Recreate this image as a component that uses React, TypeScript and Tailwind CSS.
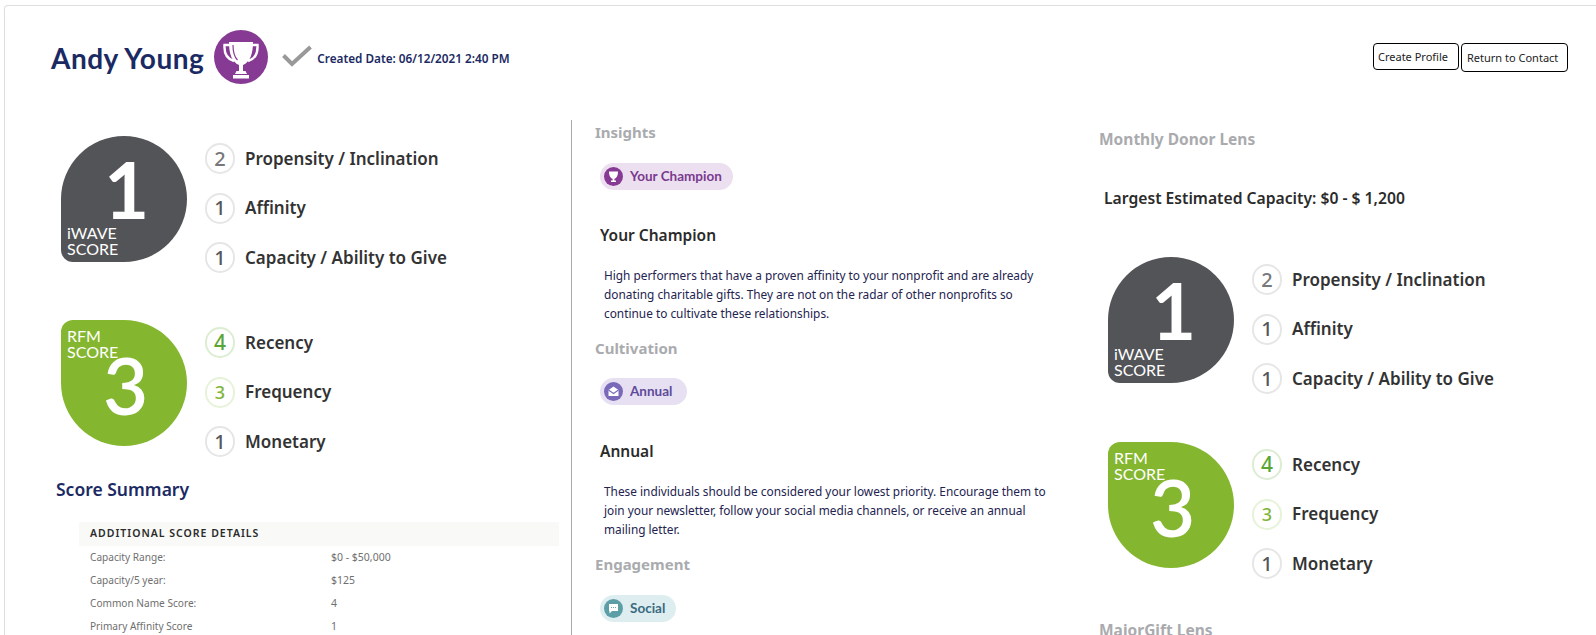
const sans = "font-['Noto_Sans','Liberation_Sans',sans-serif]";
const lato = "font-['Lato','Noto_Sans',sans-serif]";

const TrophyIcon = () => (
  <svg viewBox="0 0 54 54" className="h-[54px] w-[54px] shrink-0">
    <circle cx="27" cy="27" r="27" fill="#873a93" />
    <path d="M16 15H10.5C10 23 13 29 20 31M38 15H43.5C44 23 41 29 34 31" fill="none" stroke="#fff" strokeWidth="2.4" />
    <path d="M15 12H39C39 24 36 32 29 35V41H25V35C18 32 15 24 15 12Z" fill="#fff" />
    <path d="M19 15C19 22 20.5 27 23.5 30" fill="none" stroke="#873a93" strokeWidth="1.2" />
    <path d="M22.5 41H31.5L33 44H21Z" fill="#fff" />
    <rect x="19" y="45" width="16" height="3.5" fill="#fff" />
  </svg>
);

const PillTrophy = () => (
  <svg viewBox="0 0 19 19" className="h-[19px] w-[19px] shrink-0">
    <circle cx="9.5" cy="9.5" r="9.5" fill="#873a93" />
    <path d="M5 4.5H14C14 9 12.5 11 10.4 11.8V13.6H12V15H7V13.6H8.6V11.8C6.5 11 5 9 5 4.5Z" fill="#fff" />
  </svg>
);

const PillEnvelope = () => (
  <svg viewBox="0 0 19 19" className="h-[19px] w-[19px] shrink-0">
    <circle cx="9.5" cy="9.5" r="9.5" fill="#7a68b8" />
    <path d="M4.5 8L9.5 4.5L14.5 8V14H4.5Z" fill="#fff" />
    <path d="M4.5 8L9.5 11.5L14.5 8" fill="none" stroke="#7a68b8" strokeWidth="1.1" />
  </svg>
);

const PillChat = () => (
  <svg viewBox="0 0 19 19" className="h-[19px] w-[19px] shrink-0">
    <circle cx="9.5" cy="9.5" r="9.5" fill="#5b9ea6" />
    <path d="M5 5H14V12H8L5.5 14.5V12H5Z" fill="#fff" />
    <path d="M7 8.5H7.9M9.1 8.5H10M11.1 8.5H12" stroke="#5b9ea6" strokeWidth="1.1" />
  </svg>
);

const Row = ({ n, label, tone = 'gray' }: { n: number; label: string; tone?: 'gray' | 'light' | 'green' | 'lime' }) => {
  const ring = {
    gray: 'border-[#e6e6e6] text-[#555659] text-[20px]',
    light: 'border-[#e6e6e6] text-[#77787b] text-[20px]',
    green: 'border-[#dcedd3] text-[#5aa634] text-[21px]',
    lime: 'border-[#e6f3d8] text-[#7fb539] text-[18px]',
  }[tone];
  return (
    <div className="flex h-[31px] items-center">
      <div className={`flex h-[31px] w-[30px] shrink-0 items-center justify-center rounded-full border-2 font-medium ${ring}`}>{n}</div>
      <span className="ml-[10px] text-[17px] font-semibold whitespace-nowrap text-[#333]">{label}</span>
    </div>
  );
};

const IwaveBlock = () => (
  <div className="flex">
    <div className={`relative h-[126px] w-[126px] shrink-0 rounded-[63px_63px_63px_12px] bg-[#535457] text-white ${lato}`}>
      <span className="absolute top-[23px] left-[43px] text-[78px] leading-[60px] font-bold">1</span>
      <span className="absolute bottom-[6px] left-[6px] text-[16px] leading-[15.5px]">iWAVE<br />SCORE</span>
    </div>
    <div className="mt-[7px] ml-[18px] flex flex-col gap-[18.5px]">
      <Row n={2} label="Propensity / Inclination" tone="light" />
      <Row n={1} label="Affinity" />
      <Row n={1} label="Capacity / Ability to Give" />
    </div>
  </div>
);

const RfmBlock = () => (
  <div className="flex">
    <div className={`relative h-[126px] w-[126px] shrink-0 rounded-[12px_63px_63px_63px] bg-[#84b72f] text-white ${lato}`}>
      <span className="absolute top-[8px] left-[6px] text-[16px] leading-[15.5px]">RFM<br />SCORE</span>
      <span className="absolute top-[39px] left-[42px] text-[78px] leading-[52px] font-semibold">3</span>
    </div>
    <div className="mt-[7px] ml-[18px] flex flex-col gap-[18.5px]">
      <Row n={4} label="Recency" tone="green" />
      <Row n={3} label="Frequency" tone="lime" />
      <Row n={1} label="Monetary" />
    </div>
  </div>
);

const Pill = ({ bg, color, icon, label, pad = 'pr-[11px]' }: { bg: string; color: string; icon: React.ReactNode; label: string; pad?: string }) => (
  <div className={`flex h-[27px] w-fit items-center rounded-full pl-[4px] ${pad} ${bg}`}>
    {icon}
    <span className={`ml-[7px] text-[13.5px] font-bold ${lato} ${color}`}>{label}</span>
  </div>
);

const SectionTitle = ({ children, size = 'text-[15px]' }: { children: React.ReactNode; size?: string }) => (
  <h3 className={`leading-[20px] font-bold text-[#aaabae] ${size}`}>{children}</h3>
);

const Insight = ({ title, text }: { title: string; text: string }) => (
  <div className="pl-[5px]">
    <h4 className="text-[15.5px] leading-[20px] font-semibold text-[#2b2b2b]">{title}</h4>
    <p className="mt-[21px] ml-[4px] w-[448px] text-[11.85px] leading-[19px] text-[#23234f]">{text}</p>
  </div>
);

const details = [
  ['Capacity Range:', '$0 - $50,000'],
  ['Capacity/5 year:', '$125'],
  ['Common Name Score:', '4'],
  ['Primary Affinity Score', '1'],
];

export default function App() {
  return (
    <div className={`h-[635px] overflow-hidden bg-white pt-[5px] pl-[4px] ${sans}`}>
      <div className="h-[700px] rounded-tl-[4px] border-t border-l border-[#dedede]">
        <header className="flex h-[114px] items-start pt-[24px] pr-[28px] pl-[46px]">
          <h1 className={`mt-[10px] text-[28px] leading-[36px] font-bold tracking-[0.5px] text-[#1b2a63] ${lato}`}>Andy Young</h1>
          <div className="ml-[10px]"><TrophyIcon /></div>
          <svg viewBox="0 0 30 22" className="mt-[15px] ml-[14px] h-[22px] w-[30px]">
            <path d="M1.5 10.5L10 19L28.5 2" fill="none" stroke="#999" strokeWidth="4" />
          </svg>
          <span className="mt-[20px] ml-[5px] text-[11.75px] leading-[16px] font-semibold text-[#1b2a63]">Created Date: 06/12/2021 2:40 PM</span>
          <div className="ml-auto flex items-start gap-[2px] pt-[13px] text-[11px] text-[#222]">
            <button className="h-[27px] w-[86px] rounded-[4px] border border-black pt-[2px] pl-[4px] text-left">Create Profile</button>
            <button className="h-[29px] w-[107px] rounded-[4px] border border-black pt-[2px] pl-[5px] text-left">Return to Contact</button>
          </div>
        </header>

        <div className="flex">
          <section className="w-[567px] shrink-0 border-r border-[#a9a9a9] pt-[16px] pl-[56px]">
            <IwaveBlock />
            <div className="mt-[47px]"><RfmBlock /></div>
            <h2 className="mt-[20px] -ml-[5px] text-[17.5px] leading-[24px] font-semibold text-[#1b2a63]">Score Summary</h2>
            <div className="mt-[21px] ml-[18px] mr-[12px]">
              <div className="flex h-[24px] items-center bg-[#f9f9f7] pl-[11px] text-[10.5px] font-semibold tracking-[1px] text-[#2b2b2b]">ADDITIONAL SCORE DETAILS</div>
              {details.map(([k, v]) => (
                <div key={k} className="flex h-[23px] items-center pl-[11px] text-[#6f6f6f]">
                  <span className="w-[241px] text-[10.1px]">{k}</span>
                  <span className="text-[10.5px]">{v}</span>
                </div>
              ))}
            </div>
          </section>

          <section className="w-[527px] shrink-0 pt-[2px] pl-[23px]">
            <SectionTitle>Insights</SectionTitle>
            <div className="mt-[21px] ml-[5px]">
              <Pill bg="bg-[#ecdff0]" color="text-[#7a3a8f]" icon={<PillTrophy />} label="Your Champion" />
            </div>
            <div className="mt-[35px]">
              <Insight title="Your Champion" text="High performers that have a proven affinity to your nonprofit and are already donating charitable gifts. They are not on the radar of other nonprofits so continue to cultivate these relationships." />
            </div>
            <div className="mt-[15px]"><SectionTitle>Cultivation</SectionTitle></div>
            <div className="mt-[20px] ml-[5px]">
              <Pill bg="bg-[#e6e0f2]" color="text-[#5e4a9a]" icon={<PillEnvelope />} label="Annual" pad="pr-[15px]" />
            </div>
            <div className="mt-[36px]">
              <Insight title="Annual" text="These individuals should be considered your lowest priority. Encourage them to join your newsletter, follow your social media channels, or receive an annual mailing letter." />
            </div>
            <div className="mt-[15px]"><SectionTitle>Engagement</SectionTitle></div>
            <div className="mt-[21px] ml-[5px]">
              <Pill bg="bg-[#deeef0]" color="text-[#3a6a80]" icon={<PillChat />} label="Social" />
            </div>
          </section>

          <section className="flex-1 pt-[9px]">
            <SectionTitle size="text-[15.5px]">Monthly Donor Lens</SectionTitle>
            <p className="mt-[39px] ml-[5px] text-[15.7px] leading-[20px] font-semibold text-[#2b2b2b]">Largest Estimated Capacity: $0 - $ 1,200</p>
            <div className="mt-[49px] ml-[9px]"><IwaveBlock /></div>
            <div className="mt-[48px] ml-[9px]"><RfmBlock /></div>
            <div className="mt-[41px]"><SectionTitle size="text-[15.5px]">MajorGift Lens</SectionTitle></div>
          </section>
        </div>
      </div>
    </div>
  );
}
